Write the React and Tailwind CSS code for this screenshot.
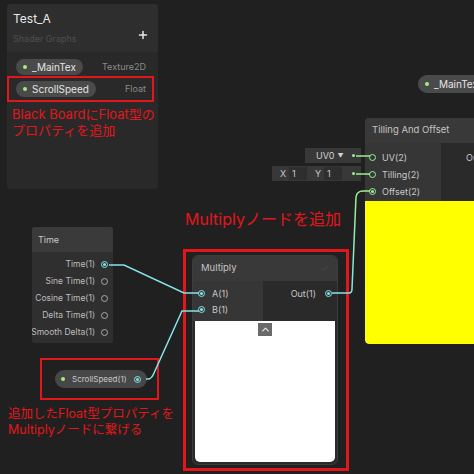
import { Check, ChevronUp, Plus } from 'lucide-react';

const font = { fontFamily: 'Inter, "Noto Sans CJK JP", sans-serif' };

const note = 'absolute text-[#e3161b] leading-[1.25] whitespace-nowrap';

function Port({ color = '#9aa0a0', filled = false }) {
  return (
    <span
      className="flex shrink-0 items-center justify-center w-[7px] h-[7px] rounded-full border"
      style={{ borderColor: color }}
    >
      {filled && <span className="w-[3px] h-[3px] rounded-full" style={{ background: color }} />}
    </span>
  );
}

function Pill({ label, className = '' }) {
  return (
    <div className={`flex items-center gap-[5px] h-[16px] px-[7px] rounded-full bg-[#4a4a4a] ${className}`}>
      <span className="w-[4px] h-[4px] rounded-full bg-[#9ff07a]" />
      <span className="text-[10px] text-[#e4e4e4] whitespace-nowrap">{label}</span>
    </div>
  );
}

function Blackboard() {
  return (
    <div className="absolute left-[7px] top-[4px] w-[151px] h-[185px] rounded-[4px] bg-[#292929] overflow-hidden">
      <div className="h-[48px] bg-[#2e2e2e] px-[6px] pt-[6px] relative">
        <div className="text-[12px] text-[#e8e8e8]">Test_A</div>
        <div className="text-[9px] text-[#4e4e4e] mt-[4px]">Shader Graphs</div>
        <Plus size={12} strokeWidth={3} className="absolute right-[9px] top-[25px] text-[#e8e8e8]" />
      </div>
      <div className="px-[9px] pt-[7px] flex flex-col gap-[6px]">
        <div className="flex items-center justify-between">
          <Pill label="_MainTex" />
          <span className="text-[9px] text-[#8a8a8a] pr-[3px]">Texture2D</span>
        </div>
        <div className="flex items-center justify-between">
          <Pill label="ScrollSpeed" />
          <span className="text-[9px] text-[#8a8a8a] pr-[3px]">Float</span>
        </div>
      </div>
    </div>
  );
}

function TimeNode() {
  const rows = ['Time(1)', 'Sine Time(1)', 'Cosine Time(1)', 'Delta Time(1)', 'Smooth Delta(1)'];
  return (
    <div className="absolute left-[32px] top-[227px] w-[81px] h-[116px] bg-[#2f2f2f] rounded-[3px] overflow-hidden">
      <div className="h-[25px] bg-[#3a3a3a] flex items-center px-[6px] text-[9px] text-[#c8c8c8]">Time</div>
      <div className="flex flex-col pt-[7px] gap-[6px] pr-[5px]">
        {rows.map((r, i) => (
          <div key={r} className="flex items-center justify-end gap-[6px] h-[11px]">
            <span className="text-[8.5px] text-[#bdbdbd] whitespace-nowrap">{r}</span>
            <Port color={i === 0 ? '#84e4e7' : '#a8a8a8'} filled={i === 0} />
          </div>
        ))}
      </div>
    </div>
  );
}

function MultiplyNode() {
  return (
    <div className="absolute left-[192px] top-[255px] w-[146px] h-[210px] bg-[#2a2a2a] border border-[#3c3c3c] rounded-[6px] overflow-hidden flex flex-col">
      <div className="h-[25px] bg-[#393939] flex items-center justify-between px-[8px]">
        <span className="text-[9.5px] text-[#c4c4c4]">Multiply</span>
        <Check size={9} className="text-[#555]" />
      </div>
      <div className="flex h-[40px]">
        <div className="w-[70px] bg-[#363636] flex flex-col pt-[7px] gap-[5px] pl-[5px]">
          {['A(1)', 'B(1)'].map((p) => (
            <div key={p} className="flex items-center gap-[7px] h-[11px]">
              <Port color="#84e4e7" filled />
              <span className="text-[9px] text-[#c8c8c8]">{p}</span>
            </div>
          ))}
        </div>
        <div className="flex-1 pt-[7px] pr-[5px]">
          <div className="flex items-center justify-end gap-[9px] h-[11px]">
            <span className="text-[9px] text-[#c8c8c8] whitespace-nowrap">Out(1)</span>
            <Port color="#84e4e7" filled />
          </div>
        </div>
      </div>
      <div className="flex-1 mx-[2px] mb-[2px] bg-white rounded-b-[5px] flex justify-center">
        <div className="mt-[2px] w-[14px] h-[13px] bg-[#6a6a6a] flex items-center justify-center">
          <ChevronUp size={11} strokeWidth={3} className="text-[#e0e0e0]" />
        </div>
      </div>
    </div>
  );
}

function TillingNode() {
  const ins = [
    ['UV(2)', false],
    ['Tilling(2)', false],
    ['Offset(2)', true],
  ];
  return (
    <div className="absolute left-[365px] top-[118px] w-[120px] h-[226px] bg-[#2a2a2a] rounded-[4px] overflow-hidden flex flex-col">
      <div className="h-[25px] bg-[#393939] flex items-center px-[7px] text-[9.5px] text-[#c4c4c4] whitespace-nowrap">Tilling And Offset</div>
      <div className="flex h-[58px]">
        <div className="w-[76px] bg-[#363636] flex flex-col pt-[9px] gap-[6px] pl-[4px]">
          {ins.map(([p, on]) => (
            <div key={p} className="flex items-center gap-[6px] h-[11px]">
              <Port color="#9aef92" filled={on} />
              <span className="text-[9px] text-[#c8c8c8]">{p}</span>
            </div>
          ))}
        </div>
        <div className="flex-1 pt-[9px] pl-[25px] text-[9px] text-[#c8c8c8] leading-[11px]">Out</div>
      </div>
      <div className="flex-1 bg-[#ffff00] rounded-bl-[4px]" />
    </div>
  );
}

function UvFields() {
  return (
    <>
      <div className="absolute left-[305px] top-[148px] w-[56px] h-[15px] bg-[#383838] flex items-center pl-[11px] gap-[3px]">
        <span className="text-[9px] text-[#d0d0d0]">UV0</span>
        <span className="text-[6px] text-[#d0d0d0]">▼</span>
        <span className="ml-auto mr-[6px] w-[3px] h-[3px] rounded-full bg-[#9aef92]" />
      </div>
      <div className="absolute left-[272px] top-[166px] w-[89px] h-[15px] bg-[#383838] flex items-center text-[9px] text-[#c8c8c8]">
        <span className="pl-[8px] w-[17px]">X</span>
        <span className="w-[18px] h-[13px] bg-[#2e2e2e] pl-[3px] leading-[13px]">1</span>
        <span className="pl-[8px] w-[17px]">Y</span>
        <span className="w-[18px] h-[13px] bg-[#2e2e2e] pl-[3px] leading-[13px]">1</span>
        <span className="ml-auto mr-[6px] w-[3px] h-[3px] rounded-full bg-[#9aef92]" />
      </div>
    </>
  );
}

function Wires() {
  return (
    <svg className="absolute inset-0" width="474" height="474" fill="none">
      <defs>
        <linearGradient id="outToOffset" x1="0" y1="293" x2="0" y2="190" gradientUnits="userSpaceOnUse">
          <stop offset="0" stopColor="#84e4e7" />
          <stop offset="1" stopColor="#9aef92" />
        </linearGradient>
      </defs>
      <path d="M109 265 H124 L184 293 H199" stroke="#84e4e7" strokeWidth="1.5" />
      <path d="M146 379 H149 Q152 378 154 373 L182 311 H199" stroke="#84e4e7" strokeWidth="1.5" />
      <path d="M332 293 H349 Q352 293 352 289 L356 197 Q357 191 363 191 H370" stroke="url(#outToOffset)" strokeWidth="1.5" />
      <path d="M356 156 H370" stroke="#9aef92" strokeWidth="1.5" />
      <path d="M356 174 H370" stroke="#9aef92" strokeWidth="1.5" />
    </svg>
  );
}

export default function App() {
  return (
    <div className="relative w-[474px] h-[474px] bg-[#202020] overflow-hidden" style={font}>
      <Blackboard />

      <div className="absolute left-[7px] top-[76px] w-[147px] h-[26px] border-2 border-[#e3161b]" />
      <div className={`${note} left-[12px] top-[106px] text-[13px]`}>
        Black BoardにFloat型の
        <br />
        プロパティを追加
      </div>

      <Pill label="_MainTex(T" className="absolute left-[418px] top-[75px] !h-[18px] pr-[20px]" />

      <UvFields />
      <TillingNode />
      <TimeNode />

      <div className={`${note} left-[185px] top-[209px] text-[16px]`}>Multiplyノードを追加</div>

      <MultiplyNode />
      <div className="absolute left-[183px] top-[249px] w-[166px] h-[222px] border-[3px] border-[#e3161b]" />

      <div className="absolute left-[55px] top-[370px] w-[92px] h-[18px] pl-[6px] rounded-full bg-[#474747] flex items-center gap-[7px]">
        <span className="w-[4px] h-[4px] rounded-full bg-[#9ff07a]" />
        <span className="text-[8px] text-[#c8c8c8] whitespace-nowrap">ScrollSpeed(1)</span>
        <Port color="#84e4e7" filled />
      </div>
      <div className="absolute left-[40px] top-[358px] w-[119px] h-[42px] border-2 border-[#e3161b]" />
      <div className={`${note} left-[8px] top-[406px] text-[12.5px]`}>
        追加したFloat型プロパティを
        <br />
        Multiplyノードに繋げる
      </div>

      <Wires />
    </div>
  );
}
